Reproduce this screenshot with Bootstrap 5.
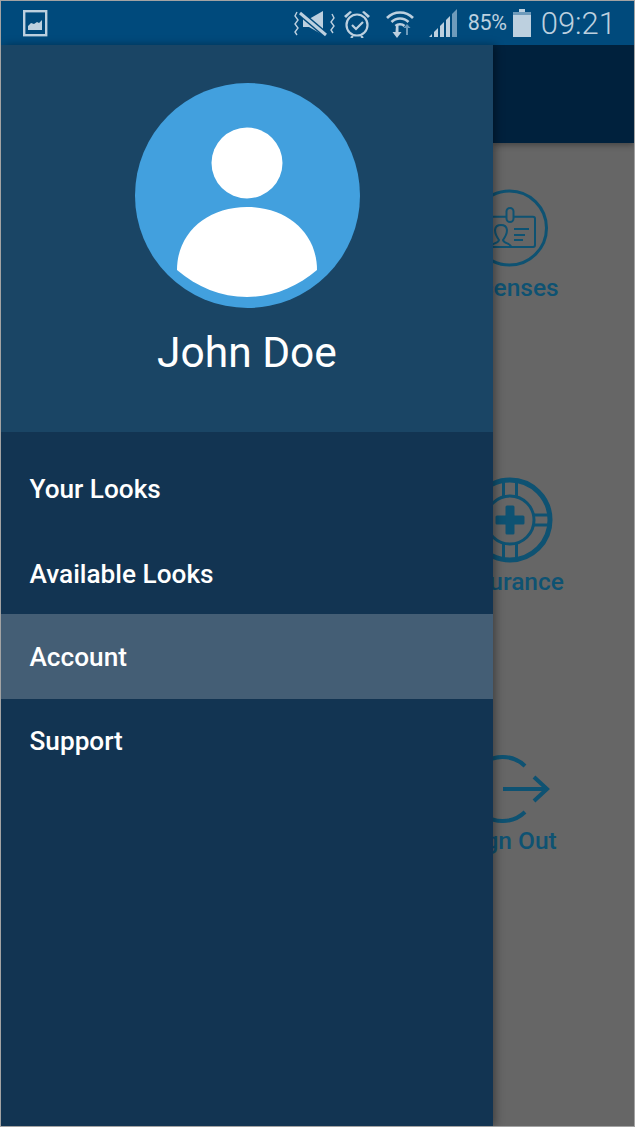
<!DOCTYPE html>
<html lang="en">
<head>
  <meta charset="UTF-8" />
  <title>Menu</title>
  <link href="https://cdn.jsdelivr.net/npm/bootstrap@5.3.0/dist/css/bootstrap.min.css" rel="stylesheet" />
  <style>
    html, body { height: 100%; }
    body { font-family: Roboto, "Liberation Sans", sans-serif; background: #666; }
    .phone-frame { height: 1127px; border: 1px solid #a3a3a3; overflow: hidden; }
    .status-bar { height: 44px; background: #004a7c; color: #bdd0df; padding: 0 18px 0 22px; flex: none; }
    .status-bar svg { display: block; flex: none; }
    .status-gap { margin-left: 14px; }
    .status-pct { font-size: 21.5px; letter-spacing: -0.3px; margin-left: 10px; }
    .status-batt { margin-left: 6px; }
    .status-time { font-size: 31px; font-weight: 300; line-height: 1; margin-left: 10px; }
    .drawer { width: 492px; flex: none; box-shadow: 3px 0 8px rgba(0,0,0,.35); z-index: 2; background: #123452; }
    .drawer-head { height: 387px; background: #1a4565; padding-top: 38px; }
    .drawer-name { font-size: 42.5px; line-height: 1; margin-top: 24px; color: #fff; }
    .drawer-menu { padding-top: 14.4px; }
    .drawer-menu .list-group-item { background: transparent; border: 0; border-radius: 0; color: #fff; font-size: 26.2px; font-weight: 500; height: 84.4px; padding: 2.4px 0 0 28.5px; display: flex; align-items: center; }
    .drawer-menu .list-group-item.active { background: #445e75; }
    .behind { min-width: 0; background: #666; overflow: hidden; }
    .behind-bar { height: 98px; background: #00213d; box-shadow: 0 2px 6px rgba(0,0,0,.35); }
    .tile { width: 200px; margin-left: -83px; color: #0e5272; font-size: 24.5px; font-weight: 500; line-height: 1; }
    .tile svg { display: block; }
    .tile-licenses { margin-top: 45px; }
    .tile-licenses svg { margin-bottom: 8px; }
    .tile-insurance { margin-top: 175px; }
    .tile-insurance svg { margin-bottom: 6px; }
    .tile-signout { margin-top: 161px; }
    .tile-signout svg { margin-bottom: 6px; }
  </style>
</head>
<body>
  <div class="phone-frame d-flex flex-column">

    <!-- status bar -->
    <div class="status-bar d-flex align-items-center justify-content-between">
      <svg width="25" height="27" viewBox="0 0 25 27">
        <rect x="1.200" y="1.200" width="22" height="24" fill="none" stroke="#bdd0df" stroke-width="2.400" />
        <path d="M5 20v-4l3-3 3 1 3-2 2 1 3-3v10z" fill="#bdd0df" />
      </svg>
      <div class="d-flex align-items-center">
        <svg width="41" height="28" viewBox="0 0 41 28" fill="none" stroke="#bdd0df">
          <path d="M3 3l-2 4 3 4-3 4 3 4-3 4 2 3M38 5l2 4-3 4 3 4-3 4 2 3" stroke-width="1.400" />
          <path d="M9 10h6l14-8v24l-14-8h-6z" fill="#bdd0df" stroke="none" />
          <path d="M6 4l26 22" stroke="#004a7c" stroke-width="6" />
          <path d="M6 4l26 22" stroke-width="3" />
        </svg>
        <svg class="ms-2" width="28" height="29" viewBox="0 0 28 29" fill="none" stroke="#bdd0df" stroke-width="2.200">
          <circle cx="14" cy="16" r="10.500" />
          <path d="M9 16l4 4 7-7M10 27l-2 2M18 27l2 2" />
          <path d="M1 7l6-5 2 1-6 6zM27 7l-6-5-2 1 6 6z" fill="#bdd0df" stroke="none" />
        </svg>
        <svg class="status-gap" width="30" height="31" viewBox="0 0 30 31" fill="none" stroke="#bdd0df" stroke-width="2.600">
          <path d="M2 10a18 18 0 0 1 26 0M6.500 14a12 12 0 0 1 17 0M10.500 18a6.500 6.500 0 0 1 9 0" />
          <path d="M11 17h2.500v7h3l-4.500 6-4.500-6h3z" fill="#bdd0df" stroke="none" />
          <path d="M21 27v-7h-2.500l3.500-4 3.500 4h-2.500v7z" fill="#6f9bbb" stroke="none" />
        </svg>
        <svg class="status-gap" width="29" height="28" viewBox="0 0 29 28">
          <path d="M0 28h3v-3zM5 28h4v-9l-4 4zM11 28h4v-15l-4 4zM17 28h4v-21l-4 4z" fill="#bdd0df" />
          <path d="M23 28h5v-28l-5 5z" fill="#6f9bbb" />
        </svg>
        <span class="status-pct">85%</span>
        <svg class="status-batt" width="18" height="28" viewBox="0 0 18 28">
          <path d="M6 0h6v3h6v25h-18v-25h6z" fill="#bdd0df" />
          <path d="M0 3h18v3h-18z" fill="#6f9bbb" />
        </svg>
        <span class="status-time">09:21</span>
      </div>
    </div>

    <div class="d-flex flex-grow-1">
      <!-- side drawer -->
      <div class="drawer d-flex flex-column">
        <div class="drawer-head d-flex flex-column align-items-center">
          <svg width="225" height="225" viewBox="0 0 225 225">
            <circle cx="112.500" cy="112.500" r="112.500" fill="#42a0de" />
            <circle cx="112" cy="80" r="35.500" fill="#fff" />
            <path d="M42 187C42 150 72 124 112 124S182 150 182 187C162 204 138 214 112 214S62 204 42 187z" fill="#fff" />
          </svg>
          <div class="drawer-name">John Doe</div>
        </div>
        <div class="drawer-menu list-group flex-grow-1">
          <a class="list-group-item" href="#">Your Looks</a>
          <a class="list-group-item" href="#">Available Looks</a>
          <a class="list-group-item active" href="#">Account</a>
          <a class="list-group-item" href="#">Support</a>
        </div>
      </div>

      <!-- page dimmed behind the drawer -->
      <div class="behind flex-grow-1">
        <div class="behind-bar"></div>
        <div class="tile tile-licenses text-center">
          <svg class="mx-auto" width="80" height="80" viewBox="0 0 80 80" fill="none" stroke="#0e5272">
            <circle cx="39.500" cy="40" r="37" stroke-width="3" />
            <rect x="5" y="28.700" width="60" height="30.300" rx="2" stroke-width="2" />
            <rect x="36.500" y="20" width="7" height="14" rx="3.500" fill="#666" stroke-width="2" />
            <path d="M21 59c0-4 7-3 8-7-6-8-5-15 2-15s8 7 2 15c1 4 8 3 8 7M44 41h15M44 47h11M44 52h9" stroke-width="2" />
          </svg>
          Licenses
        </div>
        <div class="tile tile-insurance text-center">
          <svg class="mx-auto" width="88" height="88" viewBox="0 0 88 88" fill="none" stroke="#0e5272">
            <circle cx="44" cy="44" r="40" stroke-width="5" />
            <circle cx="44" cy="44" r="24" stroke-width="3" />
            <path d="M37.500 5v15M50.500 5v15M37.500 68v15M50.500 68v15M68 39h16M68 49h16M4 39h16M4 49h16" stroke-width="3" />
            <path d="M39.500 31a1.500 1.500 0 0 1 1.500-1.500h6a1.500 1.500 0 0 1 1.500 1.500v8.500h8.500a1.500 1.500 0 0 1 1.500 1.500v6a1.500 1.500 0 0 1-1.500 1.500h-8.500v8.500a1.500 1.500 0 0 1-1.500 1.500h-6a1.500 1.500 0 0 1-1.500-1.500v-8.500h-8.500a1.500 1.500 0 0 1-1.500-1.500v-6a1.500 1.500 0 0 1 1.500-1.500h8.500z" fill="#0e5272" stroke="none" />
          </svg>
          Insurance
        </div>
        <div class="tile tile-signout text-center">
          <svg class="mx-auto" width="80" height="68" viewBox="0 0 80 68" fill="none" stroke="#0e5272" stroke-width="4">
            <path d="M55 11A32 32 0 1 0 55 57" />
            <path d="M33 34h44M64 22l13 12-13 12" />
          </svg>
          Sign Out
        </div>
      </div>
    </div>
  </div>
  <script src="https://cdn.jsdelivr.net/npm/bootstrap@5.3.0/dist/js/bootstrap.bundle.min.js"></script>
</body>
</html>
